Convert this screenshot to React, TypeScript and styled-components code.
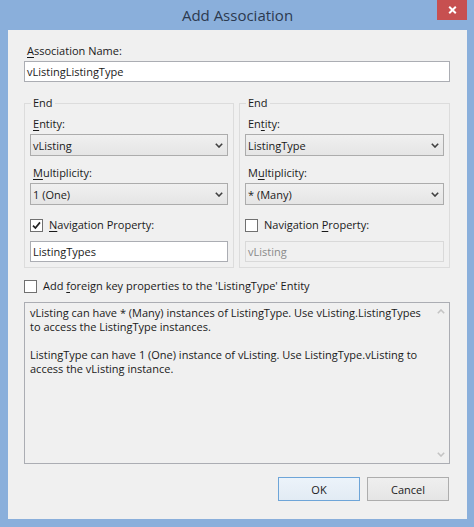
import styled, { createGlobalStyle } from 'styled-components';

const Global = createGlobalStyle`
  html, body { margin: 0; padding: 0; }
  body { background: #8aafdb; }
`;

const font = `"Open Sans", "Noto Sans", "Liberation Sans", sans-serif`;

const Window = styled.div`
  position: relative;
  width: 474px;
  height: 527px;
  background: #8aafdb;
  display: flex;
  flex-direction: column;
  font-family: ${font};
  font-size: 11px;
  color: #1a1a1a;
`;

const TitleBar = styled.div`
  height: 30px;
  display: flex;
  align-items: center;
  justify-content: center;
  font-size: 15px;
  color: #2c3a4f;
  padding-left: 1px;
`;

const CloseButton = styled.div`
  position: absolute;
  top: 0;
  right: 7px;
  width: 30px;
  height: 20px;
  background: #c75050;
  display: flex;
  align-items: center;
  justify-content: center;
`;

const Body = styled.div`
  flex: 1;
  margin: 0 7px 8px 8px;
  background: #f0f0f0;
  padding: 14px 17px 0 16px;
  display: flex;
  flex-direction: column;
`;

const Label = styled.div`
  line-height: 14px;
  margin: 0 0 3px 3px;
`;

const Key = styled.span`
  text-decoration: underline;
  text-underline-offset: 2px;
`;

const TextBox = styled.div<{ $disabled?: boolean }>`
  height: 21px;
  box-sizing: border-box;
  border: 1px solid ${p => (p.$disabled ? '#d9d9d9' : '#abadb3')};
  background: ${p => (p.$disabled ? '#f0f0f0' : '#ffffff')};
  color: ${p => (p.$disabled ? '#8a8a8a' : '#1a1a1a')};
  padding-left: 2px;
  display: flex;
  align-items: center;
`;

const Groups = styled.div`
  display: grid;
  grid-template-columns: 210px 1fr;
  gap: 5px;
  margin-top: 14px;
`;

const Group = styled.fieldset`
  margin: 0;
  min-width: 0;
  border: 1px solid #dcdcdc;
  padding: 2px 5px 5px 5px;
`;

const Legend = styled.legend`
  padding: 0 2px;
  margin-left: 1px;
  line-height: 14px;
`;

const GroupLabel = styled(Label)<{ $top?: number }>`
  margin: ${p => p.$top ?? 5}px 0 3px 3px;
`;

const Combo = styled.div`
  height: 22px;
  box-sizing: border-box;
  border: 1px solid #acacac;
  background: linear-gradient(#f0f0f0, #e5e5e5);
  padding: 0 4px 0 2px;
  display: flex;
  align-items: center;
  justify-content: space-between;
`;

const CheckRow = styled.div<{ $top: number }>`
  display: flex;
  align-items: center;
  gap: 6px;
  height: 14px;
  margin-top: ${p => p.$top}px;
  line-height: 14px;
`;

const Box = styled.div`
  width: 13px;
  height: 13px;
  box-sizing: border-box;
  border: 1px solid #707070;
  background: #ffffff;
  display: flex;
  align-items: center;
  justify-content: center;
`;

const NavText = styled(TextBox)`
  margin-top: 9px;
`;

const Info = styled.div`
  margin-top: 9px;
  height: 162px;
  box-sizing: border-box;
  border: 1px solid #abadb3;
  background: #f0f0f0;
  display: flex;
`;

const InfoText = styled.div`
  flex: 1;
  padding: 3px 0 0 5px;
  line-height: 14px;
  white-space: pre-line;
`;

const ScrollBar = styled.div`
  width: 17px;
  display: flex;
  flex-direction: column;
  justify-content: space-between;
  align-items: center;
  padding: 6px 0 6px;
`;

const Buttons = styled.div`
  display: flex;
  justify-content: flex-end;
  gap: 7px;
  margin-top: 13px;
  padding-right: 1px;
`;

const Button = styled.div<{ $default?: boolean }>`
  width: 82px;
  height: 24px;
  box-sizing: border-box;
  border: 1px solid ${p => (p.$default ? '#6ea5d8' : '#adadad')};
  background: ${p => (p.$default ? 'linear-gradient(#ecf3fa, #e2ebf4)' : 'linear-gradient(#efefef, #e5e5e5)')};
  display: flex;
  align-items: center;
  justify-content: center;
`;

const Chevron = ({ color = '#404040', up = false }: { color?: string; up?: boolean }) => (
  <svg width="8" height="5" viewBox="0 0 8 5">
    <path
      d={up ? 'M0.8 4.2 L4 1 L7.2 4.2' : 'M0.8 0.8 L4 4 L7.2 0.8'}
      fill="none"
      stroke={color}
      strokeWidth="1.6"
    />
  </svg>
);

const Check = () => (
  <svg width="9" height="9" viewBox="0 0 9 9">
    <path d="M1 4.6 L3.4 7 L8 1.4" fill="none" stroke="#222" strokeWidth="1.7" />
  </svg>
);

const Close = () => (
  <svg width="9" height="8" viewBox="0 0 9 8">
    <path d="M1.2 0.8 L7.8 7.2 M7.8 0.8 L1.2 7.2" stroke="#fff" strokeWidth="2" />
  </svg>
);

const info = `vListing can have * (Many) instances of ListingType. Use vListing.ListingTypes
to access the ListingType instances.

ListingType can have 1 (One) instance of vListing. Use ListingType.vListing to
access the vListing instance.`;

export default function App() {
  return (
    <>
      <Global />
      <Window>
        <TitleBar>Add Association</TitleBar>
        <CloseButton>
          <Close />
        </CloseButton>
        <Body>
          <Label>
            <Key>A</Key>ssociation Name:
          </Label>
          <TextBox>vListingListingType</TextBox>

          <Groups>
            <Group>
              <Legend>End</Legend>
              <GroupLabel>
                <Key>E</Key>ntity:
              </GroupLabel>
              <Combo>
                vListing
                <Chevron />
              </Combo>
              <GroupLabel $top={10}>
                <Key>M</Key>ultiplicity:
              </GroupLabel>
              <Combo>
                1 (One)
                <Chevron />
              </Combo>
              <CheckRow $top={13}>
                <Box>
                  <Check />
                </Box>
                <span>
                  <Key>N</Key>avigation Property:
                </span>
              </CheckRow>
              <NavText>ListingTypes</NavText>
            </Group>

            <Group>
              <Legend>End</Legend>
              <GroupLabel>
                En<Key>t</Key>ity:
              </GroupLabel>
              <Combo>
                ListingType
                <Chevron />
              </Combo>
              <GroupLabel $top={10}>
                M<Key>u</Key>ltiplicity:
              </GroupLabel>
              <Combo>
                * (Many)
                <Chevron />
              </Combo>
              <CheckRow $top={13}>
                <Box />
                <span>
                  Navigation <Key>P</Key>roperty:
                </span>
              </CheckRow>
              <NavText $disabled>vListing</NavText>
            </Group>
          </Groups>

          <CheckRow $top={11}>
            <Box />
            <span>
              Add <Key>f</Key>oreign key properties to the 'ListingType' Entity
            </span>
          </CheckRow>

          <Info>
            <InfoText>{info}</InfoText>
            <ScrollBar>
              <Chevron up color="#c4c4c4" />
              <Chevron color="#c4c4c4" />
            </ScrollBar>
          </Info>

          <Buttons>
            <Button $default>OK</Button>
            <Button>Cancel</Button>
          </Buttons>
        </Body>
      </Window>
    </>
  );
}
